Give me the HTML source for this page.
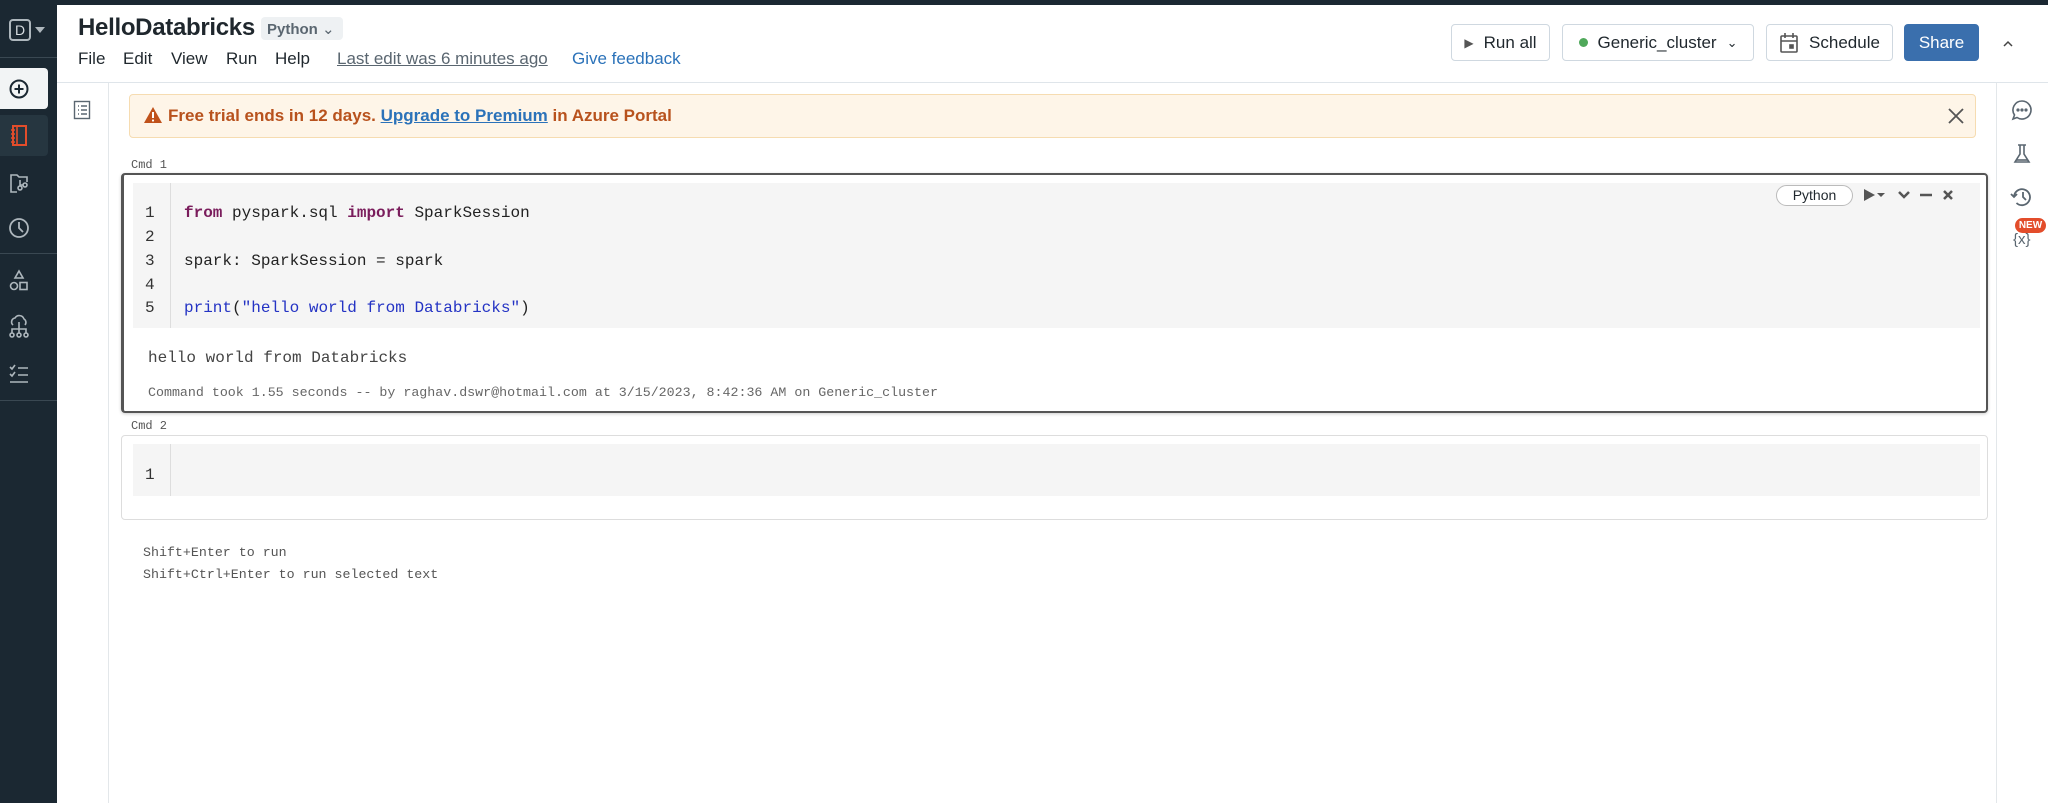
<!DOCTYPE html>
<html><head><meta charset="utf-8"><style>
*{box-sizing:border-box;margin:0;padding:0}
body{width:2048px;height:803px;overflow:hidden;background:#fff;font-family:"Liberation Sans",sans-serif;position:relative;color:#1f272d}
.a{position:absolute}
.mono{font-family:"Liberation Mono",monospace}
.side{left:0;top:0;width:57px;height:803px;background:#1b2832}
.sep{left:0;width:57px;height:1px;background:#3a4852}
.btn{border:1px solid #cfd8e0;border-radius:4px;background:#fff;font-size:17px;color:#1f272d;display:flex;align-items:center;justify-content:center;gap:10px}
svg{display:block}
.ln{left:145px;font-size:16px;color:#333}
.cd{left:184px;font-size:16px;color:#222;white-space:pre}
</style></head><body>
<div class="a" style="left:0;top:0;width:2048px;height:5px;background:#1b2832"></div>
<div class="a side"></div>
<!-- sidebar -->
<div class="a" style="left:9px;top:19px;width:22px;height:22px;border:2px solid #aeb7bd;border-radius:4px;color:#d7dde1;font-size:14px;text-align:center;line-height:18px">D</div>
<div class="a" style="left:35px;top:27px;border-left:5px solid transparent;border-right:5px solid transparent;border-top:6px solid #aeb7bd"></div>
<div class="a sep" style="top:57px"></div>
<div class="a" style="left:0;top:68px;width:48px;height:41px;background:#f2f4f5;border-radius:0 4px 4px 0"></div>
<svg class="a" style="left:8px;top:78px" width="22" height="22"><circle cx="11" cy="11" r="8.5" fill="none" stroke="#1b2832" stroke-width="2"/><path d="M11 6.5v9M6.5 11h9" stroke="#1b2832" stroke-width="2"/></svg>
<div class="a" style="left:0;top:115px;width:48px;height:41px;background:#263640;border-radius:0 4px 4px 0"></div>
<svg class="a" style="left:8px;top:124px" width="22" height="24"><rect x="5" y="2" width="13" height="19" fill="none" stroke="#e34d2b" stroke-width="2"/><path d="M9 2v19M3 6h4M3 10h4M3 14h4M3 18h4" stroke="#e34d2b" stroke-width="1.6"/></svg>
<svg class="a" style="left:8px;top:171px" width="22" height="24" fill="none" stroke="#aeb7bd" stroke-width="1.6"><path d="M9 21H3V4h6l2 2h8v5"/><circle cx="12" cy="17" r="2"/><circle cx="17" cy="14" r="2"/><path d="M12 15v-6M15 14h-3"/></svg>
<svg class="a" style="left:7px;top:216px" width="24" height="24" fill="none" stroke="#aeb7bd" stroke-width="1.8"><circle cx="12" cy="12" r="9"/><path d="M12 6v6l4 4"/></svg>
<div class="a sep" style="top:253px"></div>
<svg class="a" style="left:7px;top:268px" width="24" height="26" fill="none" stroke="#aeb7bd" stroke-width="1.6"><path d="M12 3l4 7H8z"/><circle cx="7" cy="18" r="3.5"/><rect x="13" y="14.5" width="7" height="7"/></svg>
<svg class="a" style="left:7px;top:314px" width="24" height="26" fill="none" stroke="#aeb7bd" stroke-width="1.6"><path d="M6 11a4 4 0 0 1 2-7 5 5 0 0 1 9 1 4 4 0 0 1 1 6"/><path d="M12 8v7M5 19v-4h14v4M12 15v4"/><circle cx="5" cy="21" r="2"/><circle cx="12" cy="21" r="2"/><circle cx="19" cy="21" r="2"/></svg>
<svg class="a" style="left:7px;top:362px" width="24" height="24" fill="none" stroke="#aeb7bd" stroke-width="1.6"><path d="M3 5l2 2 3-4M3 12l2 2 3-4M11 6h10M11 13h10M3 20h18"/></svg>
<div class="a sep" style="top:400px"></div>

<!-- header -->
<div class="a" style="left:78px;top:14px;font-size:24px;font-weight:bold;letter-spacing:-0.3px">HelloDatabricks</div>
<div class="a" style="left:261px;top:17px;width:82px;height:23px;background:#eef1f3;border-radius:4px;font-size:15px;font-weight:bold;color:#5a6670;padding:3px 0 0 6px">Python <span style="font-weight:normal">⌄</span></div>
<div class="a" style="left:78px;top:49px;font-size:17px;word-spacing:0">File</div>
<div class="a" style="left:123px;top:49px;font-size:17px">Edit</div>
<div class="a" style="left:171px;top:49px;font-size:17px">View</div>
<div class="a" style="left:226px;top:49px;font-size:17px">Run</div>
<div class="a" style="left:275px;top:49px;font-size:17px">Help</div>
<div class="a" style="left:337px;top:49px;font-size:17px;color:#5a6670;text-decoration:underline">Last edit was 6 minutes ago</div>
<div class="a" style="left:572px;top:49px;font-size:17px;color:#2b72b9">Give feedback</div>
<div class="a btn" style="left:1451px;top:24px;width:99px;height:37px"><span style="font-size:12px;color:#555">▶</span>Run all</div>
<div class="a btn" style="left:1562px;top:24px;width:192px;height:37px"><span style="width:9px;height:9px;border-radius:50%;background:#4fa85a;display:inline-block"></span>Generic_cluster <span style="font-size:13px">⌄</span></div>
<div class="a btn" style="left:1766px;top:24px;width:127px;height:37px"><svg width="20" height="22" fill="none" stroke="#555" stroke-width="1.6"><rect x="2" y="4" width="16" height="16" rx="1"/><path d="M2 9h16M6 1v5M14 1v5"/><rect x="11" y="13" width="3" height="3" fill="#555"/></svg>Schedule</div>
<div class="a" style="left:1904px;top:24px;width:75px;height:37px;background:#3a6fad;border-radius:4px;color:#fff;font-size:17px;text-align:center;line-height:37px">Share</div>
<svg class="a" style="left:2002px;top:39px" width="12" height="10"><path d="M2 7l4-4 4 4" fill="none" stroke="#444" stroke-width="1.5"/></svg>
<div class="a" style="left:57px;top:82px;width:1991px;height:1px;background:#dfe5ea"></div>

<!-- panels -->
<div class="a" style="left:108px;top:83px;width:1px;height:720px;background:#e3e7ea"></div>
<div class="a" style="left:1996px;top:83px;width:1px;height:720px;background:#e3e7ea"></div>
<svg class="a" style="left:73px;top:100px" width="18" height="20" fill="none" stroke="#5a6670" stroke-width="1.4"><rect x="1.5" y="1.5" width="15" height="17"/><path d="M5 6h1M8 6h6M5 10h1M8 10h6M5 14h1M8 14h6"/></svg>
<svg class="a" style="left:2011px;top:99px" width="22" height="22" fill="none" stroke="#5a6670" stroke-width="1.6"><path d="M11 2a9 9 0 1 1-5 16.5L2 20l1.5-4A9 9 0 0 1 11 2z"/><circle cx="7" cy="11" r=".8" fill="#5a6670"/><circle cx="11" cy="11" r=".8" fill="#5a6670"/><circle cx="15" cy="11" r=".8" fill="#5a6670"/></svg>
<svg class="a" style="left:2012px;top:143px" width="20" height="22" fill="none" stroke="#5a6670" stroke-width="1.6"><path d="M6 2h8M8 2v9l-5 8h14l-5-8V2"/><path d="M4 17h12"/></svg>
<svg class="a" style="left:2010px;top:186px" width="24" height="22" fill="none" stroke="#5a6670" stroke-width="1.8"><path d="M4 11a8 8 0 1 1 2.5 6"/><path d="M1 8l3 3 3-3"/><path d="M13 6v5l3 3"/></svg>
<div class="a" style="left:2015px;top:218px;width:31px;height:15px;background:#e34d2b;border-radius:8px;color:#fff;font-size:10px;font-weight:bold;text-align:center;line-height:15px">NEW</div>
<div class="a" style="left:2013px;top:231px;font-size:15px;color:#5a6670">{x}</div>

<!-- banner -->
<div class="a" style="left:129px;top:94px;width:1847px;height:44px;background:#fef5e8;border:1px solid #f6dcb1;border-radius:4px"></div>
<svg class="a" style="left:143px;top:106px" width="20" height="18"><path d="M10 1L19 17H1z" fill="#c0521b"/><path d="M10 6v6" stroke="#fff" stroke-width="2"/><circle cx="10" cy="14.5" r="1.1" fill="#fff"/></svg>
<div class="a" style="left:168px;top:106px;font-size:17px;font-weight:bold;color:#b8521d">Free trial ends in 12 days. <span style="color:#2b72b9;text-decoration:underline">Upgrade to Premium</span> in Azure Portal</div>
<svg class="a" style="left:1947px;top:107px" width="18" height="18"><path d="M2 2l14 14M16 2L2 16" stroke="#555" stroke-width="1.8"/></svg>

<!-- cell 1 -->
<div class="a mono" style="left:131px;top:158px;font-size:12px;color:#555">Cmd 1</div>
<div class="a" style="left:121px;top:173px;width:1867px;height:240px;border:2px solid #555;border-left-width:3px;border-radius:4px;box-shadow:0 1px 3px rgba(0,0,0,.2)"></div>
<div class="a" style="left:133px;top:183px;width:1847px;height:145px;background:#f5f5f5"></div>
<div class="a" style="left:170px;top:183px;width:1px;height:145px;background:#ddd"></div>
<div class="a" style="left:1776px;top:185px;width:77px;height:21px;border:1px solid #bbb;border-radius:11px;background:#fff;font-size:14px;text-align:center;line-height:19px">Python</div>
<svg class="a" style="left:1862px;top:187px" width="100" height="16"><path d="M2 2l11 6-11 6z" fill="#555"/><path d="M15 6h8l-4 4z" fill="#555"/><path d="M37 5l5 5 5-5" fill="none" stroke="#555" stroke-width="2.5"/><path d="M58 8h12" stroke="#555" stroke-width="2.5"/><path d="M82 4l8 8M90 4l-8 8" stroke="#555" stroke-width="2.5"/></svg>
<div class="a mono ln" style="top:204px">1</div>
<div class="a mono ln" style="top:228px">2</div>
<div class="a mono ln" style="top:252px">3</div>
<div class="a mono ln" style="top:276px">4</div>
<div class="a mono ln" style="top:299px">5</div>
<div class="a mono cd" style="top:204px"><b style="color:#7a1d5c">from</b> pyspark.sql <b style="color:#7a1d5c">import</b> SparkSession</div>
<div class="a mono cd" style="top:252px">spark: SparkSession = spark</div>
<div class="a mono cd" style="top:299px"><span style="color:#2433c4">print</span>(<span style="color:#2433c4">"hello world from Databricks"</span>)</div>
<div class="a mono" style="left:148px;top:349px;font-size:16px;color:#444">hello world from Databricks</div>
<div class="a mono" style="left:148px;top:385px;font-size:13.3px;color:#666">Command took 1.55 seconds -- by raghav.dswr@hotmail.com at 3/15/2023, 8:42:36 AM on Generic_cluster</div>

<!-- cell 2 -->
<div class="a mono" style="left:131px;top:419px;font-size:12px;color:#555">Cmd 2</div>
<div class="a" style="left:121px;top:435px;width:1867px;height:85px;border:1px solid #ddd;border-radius:4px"></div>
<div class="a" style="left:133px;top:444px;width:1847px;height:52px;background:#f5f5f5"></div>
<div class="a" style="left:170px;top:444px;width:1px;height:52px;background:#ddd"></div>
<div class="a mono ln" style="top:466px">1</div>

<div class="a mono" style="left:143px;top:545px;font-size:13.3px;color:#555">Shift+Enter to run</div>
<div class="a mono" style="left:143px;top:567px;font-size:13.3px;color:#555">Shift+Ctrl+Enter to run selected text</div>
</body></html>
